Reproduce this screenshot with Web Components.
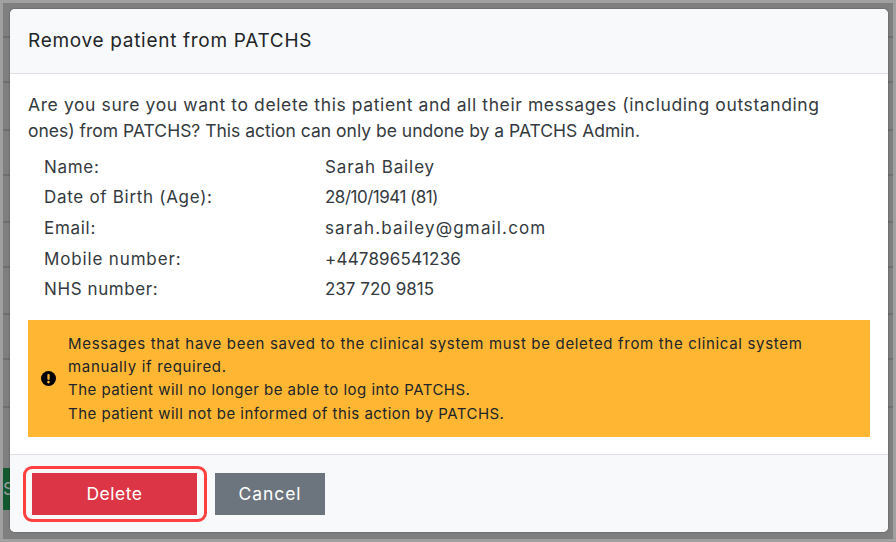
<!DOCTYPE html>
<html>
<head>
<meta charset="utf-8">
<style>
	html, body { margin: 0; height: 100%; }
	body { font-family: Inter, "Liberation Sans", sans-serif; overflow: hidden; }
</style>
</head>
<body>
<template id="backdrop-template">
	<style>
		:host {
			display: block;
			position: relative;
			width: 896px;
			height: 542px;
			box-sizing: border-box;
			border: 3px solid #a0a0a0;
			background: #7f7f7f;
			overflow: hidden;
		}
		.row { box-sizing: border-box; border-bottom: 2px solid #6f6f6f; }
		.green {
			width: 60px;
			height: 42px;
			background: #13592f;
			color: #9a9a9a;
			font-size: 17px;
			line-height: 42px;
		}
		.modal {
			position: absolute;
			left: 7px;
			top: 6px;
			width: 878px;
			height: 523px;
		}
	</style>
	<div class="row" style="height:35px"></div>
	<div class="row" style="height:45px"></div>
	<div class="row" style="height:48px"></div>
	<div class="row" style="height:45px"></div>
	<div class="row" style="height:47px"></div>
	<div class="row" style="height:45px"></div>
	<div class="row" style="height:47px"></div>
	<div class="row" style="height:45px"></div>
	<div class="row" style="height:48px"></div>
	<div style="height:60px"></div>
	<div class="green">S</div>
	<div class="modal"><slot></slot></div>
</template>

<template id="dialog-template">
	<style>
		:host {
			display: flex;
			flex-direction: column;
			height: 100%;
			background: #fff;
			border-radius: 5px;
			overflow: hidden;
			color: #343a40;
			box-shadow: 0 0 2px rgba(0,0,0,.4);
		}
		header {
			height: 65px;
			flex-shrink: 0;
			box-sizing: border-box;
			display: flex;
			align-items: center;
			padding: 0 18px 2px;
			background: #f8f9fa;
			border-bottom: 1px solid #dee2e6;
			font-size: 19px;
			letter-spacing: .7px;
			color: #212529;
		}
		main {
			flex: 1;
			padding: 18px 18px 0;
			font-size: 17.5px;
		}
		footer {
			flex-shrink: 0;
			height: 78px;
			box-sizing: border-box;
			display: flex;
			align-items: flex-start;
			gap: 18px;
			padding: 18px 22px 0;
			background: #f8f9fa;
			border-top: 1px solid #dee2e6;
		}
	</style>
	<header><slot name="title"></slot></header>
	<main><slot></slot></main>
	<footer><slot name="actions"></slot></footer>
</template>

<template id="detail-template">
	<style>
		:host {
			display: grid;
			grid-template-columns: 281px 1fr;
			height: 30.6px;
			align-items: center;
			padding-left: 16px;
			font-size: 17px;
			letter-spacing: var(--label-spacing, .7px);
		}
		#value { letter-spacing: var(--value-spacing, .9px); }
	</style>
	<span id="label"></span>
	<span id="value"></span>
</template>

<template id="warning-template">
	<style>
		:host {
			display: flex;
			align-items: center;
			box-sizing: border-box;
			height: 117px;
			margin-top: 15.5px;
			padding: 0 18px 0 13px;
			background: #ffb733;
			font-size: 15px;
			letter-spacing: .67px;
			line-height: 23.4px;
			color: #212529;
		}
		svg { width: 15px; height: 15px; flex-shrink: 0; margin-right: 12px; }
	</style>
	<svg viewBox="0 0 16 16"><circle cx="8" cy="8" r="8" fill="#000"/><rect x="6.8" y="3.2" width="2.4" height="6.2" rx="1" fill="#ffb733"/><circle cx="8" cy="11.8" r="1.4" fill="#ffb733"/></svg>
	<div><slot></slot></div>
</template>

<template id="button-template">
	<style>
		:host {
			display: inline-flex;
			position: relative;
			align-items: center;
			justify-content: center;
			height: 42px;
			box-sizing: border-box;
			padding-bottom: 2px;
			color: #fff;
			font-size: 17.5px;
			letter-spacing: .5px;
		}
		:host([variant="danger"]) { width: 165px; background: #dc3545; }
		:host([variant="danger"])::after {
			content: "";
			position: absolute;
			inset: -7px -10px -7px -9px;
			border: 3px solid #ff4040;
			border-radius: 9px;
		}
		:host([variant="secondary"]) { width: 110px; background: #6c757d; letter-spacing: .9px; }
	</style>
	<slot></slot>
</template>

<patient-backdrop>
	<confirm-dialog>
		<span slot="title">Remove patient from PATCHS</span>
		<div style="line-height:26px;letter-spacing:.6px">Are you sure you want to delete this patient and all their messages (including outstanding<br><span style="letter-spacing:0">ones) from PATCHS? This action can only be undone by a PATCHS Admin.</span></div>
		<div style="height:7.5px"></div>
		<patient-detail label="Name:" value="Sarah Bailey"></patient-detail>
		<patient-detail label="Date of Birth (Age):" value="28/10/1941 (81)" style="--value-spacing:-.5px"></patient-detail>
		<patient-detail label="Email:" value="sarah.bailey@gmail.com" style="--value-spacing:1.15px"></patient-detail>
		<patient-detail label="Mobile number:" value="+447896541236" style="--value-spacing:.2px;--label-spacing:.85px"></patient-detail>
		<patient-detail label="NHS number:" value="237 720 9815" style="--value-spacing:0;--label-spacing:.6px"></patient-detail>
		<warning-box>Messages that have been saved to the clinical system must be deleted from the clinical system<br>manually if required.<br><span style="letter-spacing:.47px">The patient will no longer be able to log into PATCHS.</span><br><span style="letter-spacing:.47px">The patient will not be informed of this action by PATCHS.</span></warning-box>
		<action-button slot="actions" variant="danger">Delete</action-button>
		<action-button slot="actions" variant="secondary">Cancel</action-button>
	</confirm-dialog>
</patient-backdrop>

<script>
function simpleElement(name, templateId) {
	customElements.define(name, class extends HTMLElement {
		constructor() {
			super();
			this
				.attachShadow({mode: 'open'})
				.appendChild(document.getElementById(templateId).content.cloneNode(true));
		}
	});
}

simpleElement('patient-backdrop', 'backdrop-template');
simpleElement('confirm-dialog', 'dialog-template');
simpleElement('warning-box', 'warning-template');
simpleElement('action-button', 'button-template');

class PatientDetail extends HTMLElement {
	constructor() {
		super();
		this
			.attachShadow({mode: 'open'})
			.appendChild(document.getElementById('detail-template').content.cloneNode(true));
	}

	connectedCallback() {
		this.shadowRoot.getElementById('label').textContent = this.getAttribute('label');
		this.shadowRoot.getElementById('value').textContent = this.getAttribute('value');
	}
}

customElements.define('patient-detail', PatientDetail);
</script>
</body>
</html>
